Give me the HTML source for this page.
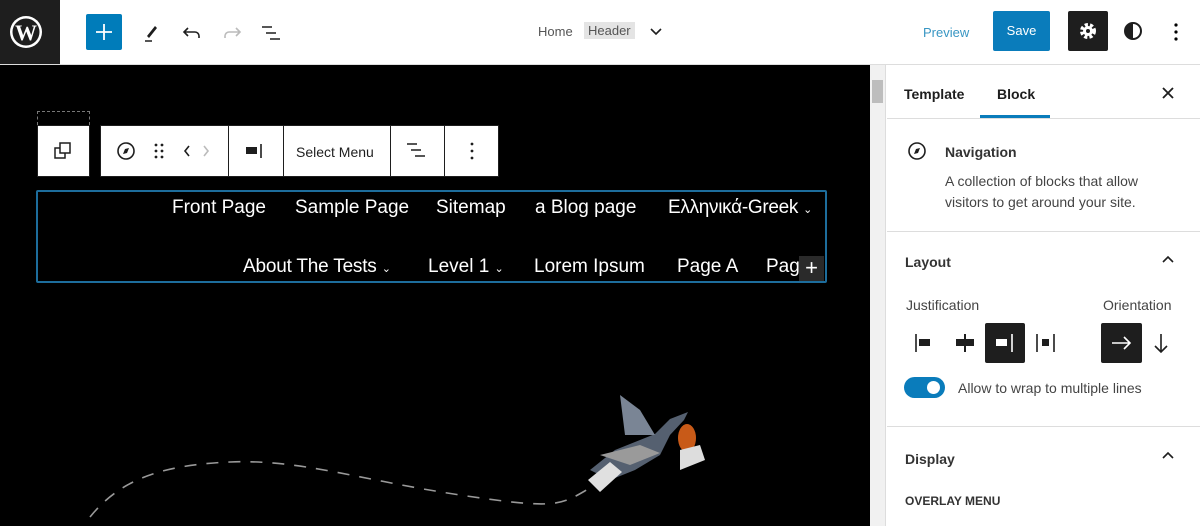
<!DOCTYPE html>
<html><head><meta charset="utf-8"><style>
*{box-sizing:border-box;margin:0;padding:0}
body{width:1200px;height:526px;overflow:hidden;background:#fff;font-family:"Liberation Sans",sans-serif;color:#1e1e1e;position:relative}
.a{position:absolute}
svg{display:block}
.nav{color:#fff;font-size:19px;white-space:nowrap}
.tb{background:#fff;border:1px solid #1e1e1e;height:52px;top:125px}
.sep{position:absolute;top:0;width:1px;height:50px;background:#1e1e1e}
.s13{font-size:13px}
</style></head><body>
<div class="a" style="left:0;top:0;width:60px;height:65px;background:#1e1e1e"></div>
<svg class="a" style="left:8px;top:14px" width="36" height="36" viewBox="0 0 36 36"><circle cx="18" cy="18" r="16" fill="#fff"/><circle cx="18" cy="18" r="13.5" fill="#1e1e1e"/><text x="18" y="26" text-anchor="middle" font-family="Liberation Serif" font-size="22" font-weight="bold" fill="#fff">W</text></svg>
<div class="a" style="left:86px;top:14px;width:36px;height:36px;background:#007cba;border-radius:2px"></div>
<svg class="a" style="left:86px;top:14px" width="36" height="36"><path d="M18 10v16M10 18h16" stroke="#fff" stroke-width="1.8"/></svg>
<svg class="a" style="left:139px;top:20px" width="24" height="24"><path d="M8 16l8-10 2 2-8 10z" fill="#1e1e1e"/><path d="M6 21h7" stroke="#1e1e1e" stroke-width="1.5"/></svg>
<svg class="a" style="left:180px;top:20px" width="24" height="24"><path d="M8 8l-4 4 4 4M4 12h11a4 4 0 0 1 4 4v2" fill="none" stroke="#1e1e1e" stroke-width="1.6"/></svg>
<svg class="a" style="left:220px;top:20px" width="24" height="24"><path d="M16 8l4 4-4 4M20 12H9a4 4 0 0 0-4 4v2" fill="none" stroke="#bbb" stroke-width="1.6"/></svg>
<svg class="a" style="left:260px;top:20px" width="24" height="24"><path d="M2 7h10M6 13h10M10 19h10" stroke="#1e1e1e" stroke-width="1.6"/></svg>
<div class="a s13" style="left:538px;top:24px;color:#555">Home</div>
<div class="a s13" style="left:584px;top:22px;background:#e4e4e4;color:#555;padding:1px 4px">Header</div>
<svg class="a" style="left:648px;top:25px" width="16" height="14"><path d="M3 4l5 5 5-5" fill="none" stroke="#1e1e1e" stroke-width="1.6"/></svg>
<div class="a s13" style="left:923px;top:25px;color:#3896c3">Preview</div>
<div class="a s13" style="left:993px;top:11px;width:57px;height:40px;background:#0a7cbb;color:#fff;text-align:center;line-height:40px;border-radius:2px">Save</div>
<div class="a" style="left:1068px;top:11px;width:40px;height:40px;background:#1e1e1e;border-radius:2px"></div>
<svg class="a" style="left:1078px;top:21px" width="20" height="20" viewBox="0 0 20 20"><circle cx="10" cy="10" r="6" fill="none" stroke="#fff" stroke-width="4" stroke-dasharray="3 2"/><circle cx="10" cy="10" r="5" fill="#fff"/><circle cx="10" cy="10" r="2" fill="#1e1e1e"/></svg>
<svg class="a" style="left:1122px;top:20px" width="22" height="22"><circle cx="11" cy="11" r="8" fill="none" stroke="#1e1e1e" stroke-width="2"/><path d="M11 3a8 8 0 0 0 0 16z" fill="#1e1e1e"/></svg>
<svg class="a" style="left:1170px;top:20px" width="12" height="24"><circle cx="6" cy="5" r="1.6"/><circle cx="6" cy="12" r="1.6"/><circle cx="6" cy="19" r="1.6"/></svg>
<div class="a" style="left:0;top:64px;width:1200px;height:1px;background:#ddd"></div>
<div class="a" style="left:0;top:65px;width:870px;height:461px;background:#000"></div>
<div class="a" style="left:870px;top:65px;width:16px;height:461px;background:#f1f1f1;border-right:1px solid #ddd"></div>
<div class="a" style="left:872px;top:80px;width:11px;height:23px;background:#bdbdbd"></div>
<div class="a" style="left:37px;top:111px;width:53px;height:14px;border:1px dashed #777;border-bottom:none"></div>
<div class="a tb" style="left:37px;width:53px"></div>
<svg class="a" style="left:52px;top:140px" width="22" height="22"><rect x="3" y="8" width="10" height="10" fill="none" stroke="#1e1e1e" stroke-width="1.5"/><rect x="8" y="3" width="10" height="10" fill="#fff" stroke="#1e1e1e" stroke-width="1.5"/></svg>
<div class="a tb" style="left:100px;width:399px"><div class="sep" style="left:127px"></div><div class="sep" style="left:182px"></div><div class="sep" style="left:289px"></div><div class="sep" style="left:343px"></div></div>
<svg class="a" style="left:115px;top:140px" width="22" height="22"><circle cx="11" cy="11" r="8" fill="none" stroke="#1e1e1e" stroke-width="1.6"/><path d="M8 14l2-5 4-1-2 5z" fill="#1e1e1e"/></svg>
<svg class="a" style="left:152px;top:142px" width="14" height="18" fill="#1e1e1e"><circle cx="4" cy="3" r="1.4"/><circle cx="10" cy="3" r="1.4"/><circle cx="4" cy="9" r="1.4"/><circle cx="10" cy="9" r="1.4"/><circle cx="4" cy="15" r="1.4"/><circle cx="10" cy="15" r="1.4"/></svg>
<svg class="a" style="left:180px;top:142px" width="34" height="18"><path d="M9 4l-4 5 4 5" fill="none" stroke="#1e1e1e" stroke-width="1.6"/><path d="M24 4l4 5-4 5" fill="none" stroke="#bbb" stroke-width="1.6"/></svg>
<svg class="a" style="left:243px;top:140px" width="24" height="22"><rect x="3" y="7" width="11" height="7" fill="#1e1e1e"/><path d="M18 4v14" stroke="#1e1e1e" stroke-width="1.6"/></svg>
<div class="a" style="left:296px;top:144px;font-size:14px;color:#1e1e1e">Select Menu</div>
<svg class="a" style="left:405px;top:140px" width="24" height="22"><path d="M2 4h10M6 10h10M10 16h10" stroke="#1e1e1e" stroke-width="1.6"/></svg>
<svg class="a" style="left:466px;top:141px" width="12" height="20" fill="#1e1e1e"><circle cx="6" cy="3" r="1.4"/><circle cx="6" cy="10" r="1.4"/><circle cx="6" cy="17" r="1.4"/></svg>
<div class="a" style="left:36px;top:190px;width:791px;height:93px;border:2px solid #1d6d9c;border-radius:2px"></div>
<div class="a nav" style="left:172px;top:197px">Front Page</div>
<div class="a nav" style="left:295px;top:197px">Sample Page</div>
<div class="a nav" style="left:436px;top:197px">Sitemap</div>
<div class="a nav" style="left:535px;top:197px">a Blog page</div>
<div class="a nav" style="left:668px;top:197px;letter-spacing:-0.3px">Ελληνικά-Greek <span style="font-size:11px">⌄</span></div>
<div class="a nav" style="left:243px;top:256px;letter-spacing:-0.2px">About The Tests <span style="font-size:11px">⌄</span></div>
<div class="a nav" style="left:428px;top:256px">Level 1 <span style="font-size:11px">⌄</span></div>
<div class="a nav" style="left:534px;top:256px">Lorem Ipsum</div>
<div class="a nav" style="left:677px;top:256px">Page A</div>
<div class="a nav" style="left:766px;top:256px;width:33px;overflow:hidden">Page</div>
<div class="a" style="left:799px;top:256px;width:25px;height:25px;background:#2a2a2a;color:#fff;font-size:22px;text-align:center;line-height:24px">+</div>
<svg class="a" style="left:60px;top:380px" width="680" height="146"><path d="M30 137C60 100 100 85 170 82S300 100 400 115S500 125 530 108" fill="none" stroke="#999" stroke-width="1.6" stroke-dasharray="12 10"/>
<path d="M530 90l25-20 20-8 20-8 15-15 18-7-4 8-14 15-10 20-25 15-25 10z" fill="#556070"/>
<path d="M565 55l-5-40 20 15 15 25z" fill="#7a8595"/>
<path d="M540 75l40-10 20 8-30 12z" fill="#9a9a9a"/>
<ellipse cx="627" cy="58" rx="9" ry="14" fill="#c85a18"/>
<path d="M620 70l20-5 5 15-25 10z" fill="#ddd"/>
<path d="M528 100l22-18 12 10-22 20z" fill="#e0e0e0"/></svg>
<div class="a" style="left:904px;top:86px;font-size:14px;font-weight:bold;color:#1e1e1e">Template</div>
<div class="a" style="left:997px;top:86px;font-size:14px;font-weight:bold;color:#1e1e1e">Block</div>
<div class="a" style="left:980px;top:115px;width:70px;height:4px;background:#0a7cbb"></div>
<svg class="a" style="left:1160px;top:85px" width="16" height="16"><path d="M3 3l10 10M13 3L3 13" stroke="#1e1e1e" stroke-width="1.8"/></svg>
<div class="a" style="left:887px;top:118px;width:313px;height:1px;background:#ddd"></div>
<svg class="a" style="left:906px;top:140px" width="22" height="22"><circle cx="11" cy="11" r="8" fill="none" stroke="#1e1e1e" stroke-width="1.6"/><path d="M8 14l2-5 4-1-2 5z" fill="#1e1e1e"/></svg>
<div class="a" style="left:945px;top:144px;font-size:14px;font-weight:bold;color:#333">Navigation</div>
<div class="a" style="left:945px;top:171px;font-size:14px;line-height:21px;color:#444">A collection of blocks that allow<br>visitors to get around your site.</div>
<div class="a" style="left:887px;top:231px;width:313px;height:1px;background:#ddd"></div>
<div class="a" style="left:905px;top:254px;font-size:14px;font-weight:bold;color:#333">Layout</div>
<svg class="a" style="left:1160px;top:252px" width="16" height="14"><path d="M3 10l5-5 5 5" fill="none" stroke="#1e1e1e" stroke-width="1.6"/></svg>
<div class="a" style="left:906px;top:297px;font-size:14px;color:#444">Justification</div>
<div class="a" style="left:1103px;top:297px;font-size:14px;color:#444">Orientation</div>
<svg class="a" style="left:905px;top:322px" width="160" height="42"><path d="M11 12v18" stroke="#1e1e1e" stroke-width="1.6"/><rect x="14" y="17" width="11" height="7" fill="#1e1e1e"/>
<rect x="51" y="17" width="18" height="7" fill="#1e1e1e"/><path d="M60 12v18" stroke="#1e1e1e" stroke-width="2"/>
<rect x="80" y="1" width="40" height="40" rx="2" fill="#1e1e1e"/><rect x="91" y="17" width="11" height="7" fill="#fff"/><path d="M107 12v18" stroke="#fff" stroke-width="1.6"/>
<path d="M132 12v18M149 12v18" stroke="#1e1e1e" stroke-width="1.6"/><rect x="137" y="17" width="7" height="7" fill="#1e1e1e"/></svg>
<div class="a" style="left:1101px;top:323px;width:41px;height:40px;background:#1e1e1e;border-radius:2px"></div>
<svg class="a" style="left:1101px;top:323px" width="41" height="40"><path d="M11 20h18M23 14l6 6-6 6" fill="none" stroke="#fff" stroke-width="1.6"/></svg>
<svg class="a" style="left:1150px;top:330px" width="22" height="26"><path d="M11 4v18M5 16l6 6 6-6" fill="none" stroke="#1e1e1e" stroke-width="1.6"/></svg>
<div class="a" style="left:904px;top:377px;width:41px;height:21px;background:#0a7cbb;border-radius:11px"></div>
<div class="a" style="left:927px;top:381px;width:13px;height:13px;background:#fff;border-radius:50%"></div>
<div class="a" style="left:958px;top:380px;font-size:14px;color:#444">Allow to wrap to multiple lines</div>
<div class="a" style="left:887px;top:426px;width:313px;height:1px;background:#ddd"></div>
<div class="a" style="left:905px;top:451px;font-size:14px;font-weight:bold;color:#333">Display</div>
<svg class="a" style="left:1160px;top:448px" width="16" height="14"><path d="M3 10l5-5 5 5" fill="none" stroke="#1e1e1e" stroke-width="1.6"/></svg>
<div class="a" style="left:905px;top:494px;font-size:12px;font-weight:bold;color:#333">OVERLAY MENU</div>
</body></html>
